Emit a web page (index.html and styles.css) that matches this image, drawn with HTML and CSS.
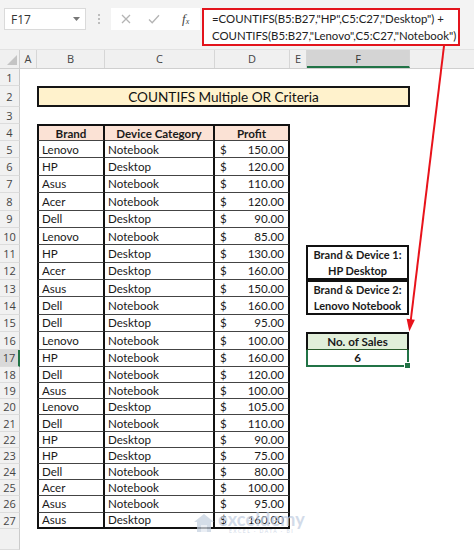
FILE: index.html
```html
<!DOCTYPE html>
<html>
<head>
<meta charset="utf-8">
<link rel="stylesheet" href="styles.css">
</head>
<body>
<div class="app">
  <div class="fbar">
    <div class="namebox"><span class="nb-text">F17</span><svg class="dd" width="7" height="4" viewBox="0 0 7 4"><path d="M0 0h7L3.5 4z" fill="#777"/></svg></div>
    <div class="grip"><i></i><i></i><i></i></div>
    <div class="btns">
      <svg width="10" height="10" viewBox="0 0 10 10"><path d="M1 1L9 9M9 1L1 9" stroke="#b4b4b4" stroke-width="1.3" fill="none"/></svg>
      <svg width="12" height="10" viewBox="0 0 12 10"><path d="M1 5.5L4.2 8.7L11 1.2" stroke="#b4b4b4" stroke-width="1.3" fill="none"/></svg>
      <span class="fx"><i>f</i><sub>x</sub></span>
    </div>
    <div class="formula">=COUNTIFS(B5:B27,"HP",C5:C27,"Desktop") +<br>COUNTIFS(B5:B27,"Lenovo",C5:C27,"Notebook")</div>
  </div>

  <div class="sheet">
    <div class="colhdr">
      <div class="corner"><svg width="10" height="10" viewBox="0 0 10 10"><path d="M10 0V10H0z" fill="#c4c4c4"/></svg></div>
      <div class="ch ca">A</div><div class="ch cb">B</div><div class="ch cc">C</div><div class="ch cd">D</div><div class="ch ce">E</div><div class="ch cf sel">F</div><div class="ch cg"></div>
    </div>

    <div class="row r17"><div class="rh">1</div></div>
    <div class="row r21"><div class="rh">2</div><div class="ca"></div><div class="title">COUNTIFS Multiple OR Criteria</div></div>
    <div class="row r17"><div class="rh">3</div></div>
    <div class="row r17"><div class="rh">4</div><div class="ca"></div><div class="cb t th">Brand</div><div class="cc t th">Device Category</div><div class="cd t th">Profit</div></div>

    <div class="row u"><div class="rh">5</div><div class="ca"></div><div class="cb t">Lenovo</div><div class="cc t">Notebook</div><div class="cd t"><span>$</span><span>150.00</span></div></div>
    <div class="row u"><div class="rh">6</div><div class="ca"></div><div class="cb t">HP</div><div class="cc t">Desktop</div><div class="cd t"><span>$</span><span>120.00</span></div></div>
    <div class="row u"><div class="rh">7</div><div class="ca"></div><div class="cb t">Asus</div><div class="cc t">Notebook</div><div class="cd t"><span>$</span><span>110.00</span></div></div>
    <div class="row u"><div class="rh">8</div><div class="ca"></div><div class="cb t">Acer</div><div class="cc t">Notebook</div><div class="cd t"><span>$</span><span>120.00</span></div></div>
    <div class="row u"><div class="rh">9</div><div class="ca"></div><div class="cb t">Dell</div><div class="cc t">Desktop</div><div class="cd t"><span>$</span><span>90.00</span></div></div>
    <div class="row u"><div class="rh">10</div><div class="ca"></div><div class="cb t">Lenovo</div><div class="cc t">Notebook</div><div class="cd t"><span>$</span><span>85.00</span></div></div>
    <div class="row u"><div class="rh">11</div><div class="ca"></div><div class="cb t">HP</div><div class="cc t">Desktop</div><div class="cd t"><span>$</span><span>130.00</span></div><div class="ce"></div><div class="cf box btop">Brand &amp; Device 1:</div></div>
    <div class="row u"><div class="rh">12</div><div class="ca"></div><div class="cb t">Acer</div><div class="cc t">Desktop</div><div class="cd t"><span>$</span><span>160.00</span></div><div class="ce"></div><div class="cf box bbot">HP Desktop</div></div>
    <div class="row u"><div class="rh">13</div><div class="ca"></div><div class="cb t">Asus</div><div class="cc t">Desktop</div><div class="cd t"><span>$</span><span>150.00</span></div><div class="ce"></div><div class="cf box btop">Brand &amp; Device 2:</div></div>
    <div class="row u"><div class="rh">14</div><div class="ca"></div><div class="cb t">Dell</div><div class="cc t">Notebook</div><div class="cd t"><span>$</span><span>160.00</span></div><div class="ce"></div><div class="cf box bbot">Lenovo Notebook</div></div>
    <div class="row u"><div class="rh">15</div><div class="ca"></div><div class="cb t">Dell</div><div class="cc t">Desktop</div><div class="cd t"><span>$</span><span>95.00</span></div></div>
    <div class="row u"><div class="rh">16</div><div class="ca"></div><div class="cb t">Lenovo</div><div class="cc t">Notebook</div><div class="cd t"><span>$</span><span>100.00</span></div><div class="ce"></div><div class="cf sales">No. of Sales</div></div>
    <div class="row u"><div class="rh rsel">17</div><div class="ca"></div><div class="cb t">HP</div><div class="cc t">Notebook</div><div class="cd t"><span>$</span><span>160.00</span></div><div class="ce"></div><div class="cf result">6<i class="handle"></i></div></div>

    <div class="row l"><div class="rh">18</div><div class="ca"></div><div class="cb t">Dell</div><div class="cc t">Notebook</div><div class="cd t"><span>$</span><span>120.00</span></div></div>
    <div class="row l"><div class="rh">19</div><div class="ca"></div><div class="cb t">Asus</div><div class="cc t">Notebook</div><div class="cd t"><span>$</span><span>100.00</span></div></div>
    <div class="row l"><div class="rh">20</div><div class="ca"></div><div class="cb t">Lenovo</div><div class="cc t">Desktop</div><div class="cd t"><span>$</span><span>105.00</span></div></div>
    <div class="row l"><div class="rh">21</div><div class="ca"></div><div class="cb t">Dell</div><div class="cc t">Notebook</div><div class="cd t"><span>$</span><span>110.00</span></div></div>
    <div class="row l"><div class="rh">22</div><div class="ca"></div><div class="cb t">HP</div><div class="cc t">Desktop</div><div class="cd t"><span>$</span><span>90.00</span></div></div>
    <div class="row l"><div class="rh">23</div><div class="ca"></div><div class="cb t">HP</div><div class="cc t">Desktop</div><div class="cd t"><span>$</span><span>75.00</span></div></div>
    <div class="row l"><div class="rh">24</div><div class="ca"></div><div class="cb t">Dell</div><div class="cc t">Notebook</div><div class="cd t"><span>$</span><span>80.00</span></div></div>
    <div class="row l"><div class="rh">25</div><div class="ca"></div><div class="cb t">Acer</div><div class="cc t">Notebook</div><div class="cd t"><span>$</span><span>100.00</span></div></div>
    <div class="row l"><div class="rh">26</div><div class="ca"></div><div class="cb t">Asus</div><div class="cc t">Notebook</div><div class="cd t"><span>$</span><span>95.00</span></div></div>
    <div class="row l"><div class="rh">27</div><div class="ca"></div><div class="cb t last">Asus</div><div class="cc t last">Desktop</div><div class="cd t last"><span>$</span><span>160.00</span></div></div>
    <div class="row filler"><div class="rh"></div></div>
  </div>

  <svg class="arrow" width="474" height="550" viewBox="0 0 474 550">
    <line x1="444" y1="46" x2="410.8" y2="320" stroke="#e8131b" stroke-width="2"/>
    <polygon points="409.3,331.5 414.9,319.8 406.6,318.8" fill="#e8131b"/>
  </svg>

  <div class="wm">
    <svg width="22" height="20" viewBox="0 0 22 20"><path d="M11 1L1 9h3v10h14V9h3z" fill="#c3cfdf"/><path d="M8 12h6v7H8z" fill="#e3e9f1"/></svg>
    <div class="wm-text"><span class="wm-name">exceldemy</span><span class="wm-sub">EXCEL · DATA · BI</span></div>
  </div>
</div>
</body>
</html>
```

FILE: styles.css
```css
* { box-sizing: border-box; }
html, body { margin: 0; padding: 0; }
body { background: #ffffff; font-family: "Lato", "Liberation Sans", sans-serif; color: #1a1a1a; }

.app { position: relative; width: 474px; height: 550px; overflow: hidden; }

/* ---------- formula bar ---------- */
.fbar {
  height: 50px;
  background: #f3f3f3;
  display: flex;
  align-items: flex-start;
  padding-top: 8px;
  border-bottom: 1px solid #e2e2e2;
}
.namebox {
  margin-left: 4px;
  width: 82px;
  height: 22px;
  background: #fff;
  border: 1px solid #dadada;
  display: flex;
  align-items: center;
  justify-content: space-between;
  padding: 0 5px 0 6px;
}
.nb-text { font-family: "Open Sans", "Liberation Sans", sans-serif; font-size: 12px; color: #333; }
.grip { width: 25px; height: 22px; display: flex; flex-direction: column; align-items: center; justify-content: center; gap: 2px; }
.grip i { display: block; width: 2px; height: 2px; background: #bdbdbd; }
.btns {
  width: 89px;
  height: 22px;
  background: #fff;
  display: flex;
  align-items: center;
  padding-left: 10px;
  gap: 17px;
}
.fx { font-family: "Liberation Serif", serif; font-size: 13px; color: #444; margin-left: 5px; }
.fx sub { font-size: 8px; font-style: italic; vertical-align: -1px; }
.formula {
  margin-left: 2px;
  width: 258px;
  height: 38px;
  background: #fff;
  border: 2px solid #e3141c;
  font-size: 11.4px;
  line-height: 16.5px;
  padding: 1px 0 0 8px;
  color: #222;
  white-space: nowrap;
}

/* ---------- sheet ---------- */
.sheet { display: flex; flex-direction: column; height: 500px; }
.colhdr { display: flex; height: 19px; background: #f0f0f0; border-bottom: 1px solid #cfcfcf; }
.corner { width: 20px; border-right: 1px solid #cfcfcf; display: flex; align-items: flex-end; justify-content: flex-end; padding: 0 2px 3px 0; }
.ch {
  font-family: "Open Sans", "Liberation Sans", sans-serif;
  font-size: 11px;
  color: #444;
  text-align: center;
  line-height: 18px;
  border-right: 1px solid #d6d6d6;
}
.ch.sel { background: #d4d4d4; border-bottom: 2px solid #217346; color: #333; }
.ch.cg { border-right: none; }

.ca { width: 17px; }
.cb { width: 68px; }
.cc { width: 110px; }
.cd { width: 75px; }
.ce { width: 17px; }
.cf { width: 103px; }
.cg { flex: 1; }

.row { display: flex; font-size: 11.6px; }
.r17 { height: 17px; }
.r21 { height: 21px; }
.u { height: 17.385px; }
.l { height: 16.2px; }
.filler { flex: 1; }

.rh {
  width: 20px;
  flex: none;
  background: #f1f1f1;
  border-right: 1px solid #cbcbcb;
  border-bottom: 1px solid #dcdcdc;
  font-family: "Open Sans", "Liberation Sans", sans-serif;
  font-size: 11px;
  color: #444;
  text-align: center;
  display: flex;
  align-items: center;
  justify-content: center;
}
.rh.rsel { background: #d9d9d9; border-right: 2px solid #217346; }

.title {
  width: 373px;
  background: #fff2cc;
  border: 2px solid #151515;
  font-size: 13.6px;
  text-align: center;
  display: flex;
  align-items: center;
  justify-content: center;
  color: #111;
}

/* table */
.t {
  border-bottom: 1px solid #444;
  display: flex;
  align-items: center;
  padding-left: 3px;
  white-space: nowrap;
  color: #1a1a1a;
}
.cb.t { border-left: 2px solid #111; border-right: 2px solid #111; }
.cc.t { border-right: 2px solid #111; }
.cd.t { border-right: 2px solid #111; justify-content: space-between; padding: 0 4px 0 5px; }
.t.th {
  border-top: 2px solid #111;
  background: #fbe2d5;
  font-weight: 700;
  justify-content: center;
  padding: 0;
}
.t.last { border-bottom: 2px solid #111; }

/* right boxes */
.box {
  border-left: 2px solid #111;
  border-right: 2px solid #111;
  font-weight: 700;
  font-size: 11px;
  display: flex;
  align-items: center;
  justify-content: center;
  white-space: nowrap;
  margin-left: -1px;
}
.box.btop { border-top: 2px solid #111; }
.box.bbot { border-bottom: 2px solid #111; }
.sales {
  background: #e2efda;
  border: 2px solid #111;
  border-bottom: 1px solid #2b5a2b;
  font-weight: 700;
  display: flex;
  align-items: center;
  justify-content: center;
  margin-left: -1px;
}
.result {
  position: relative;
  border: 2px solid #217346;
  border-top: none;
  font-weight: 700;
  display: flex;
  align-items: center;
  justify-content: center;
  margin-left: -1px;
}
.handle {
  position: absolute;
  right: -4px;
  bottom: -4px;
  width: 5px;
  height: 5px;
  background: #217346;
  border: 1px solid #fff;
  box-sizing: content-box;
}

/* overlays */
.arrow { position: absolute; left: 0; top: 0; pointer-events: none; }
.wm {
  position: absolute;
  left: 193px;
  top: 510px;
  display: flex;
  align-items: center;
  gap: 3px;
  opacity: 0.7;
}
.wm-text { display: flex; flex-direction: column; align-items: center; }
.wm-name { font-family: "Lato", sans-serif; font-weight: 700; font-size: 18px; line-height: 18px; color: #c0cce0; letter-spacing: 0.2px; }
.wm-sub { font-family: "Lato", sans-serif; font-size: 5px; letter-spacing: 1.5px; color: #c0cce0; line-height: 7px; }
```
